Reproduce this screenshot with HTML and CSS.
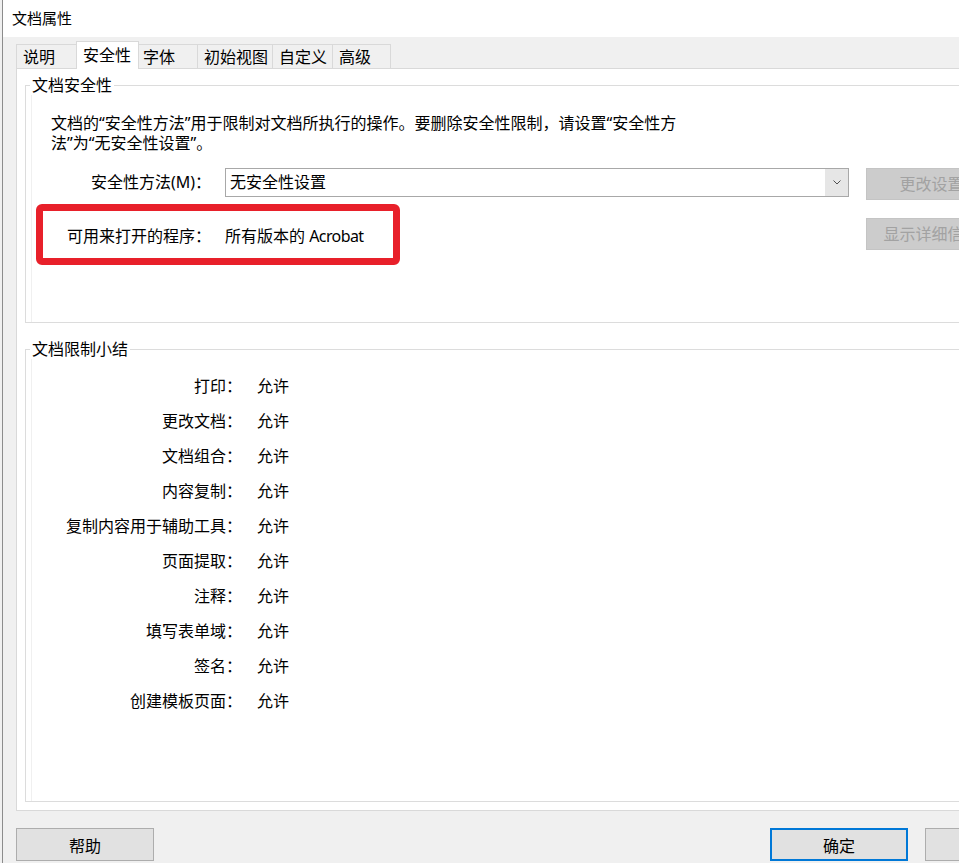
FILE: index.html
```
<!DOCTYPE html>
<html lang="zh-CN">
<head>
<meta charset="utf-8">
<title>文档属性</title>
<link rel="stylesheet" href="styles.css">
</head>
<body>
<div class="window">
  <div class="titlebar">文档属性</div>
  <div class="dialog">
    <div class="tabs">
      <div class="tab tab--desc">说明</div>
      <div class="tab tab--active">安全性</div>
      <div class="tab tab--fonts">字体</div>
      <div class="tab tab--view">初始视图</div>
      <div class="tab tab--custom">自定义</div>
      <div class="tab tab--adv">高级</div>
    </div>
    <div class="panel">
      <fieldset class="group group--security">
        <legend class="group__title">文档安全性</legend>
        <div class="group__body security">
          <p class="security__desc">文档的“安全性方法”用于限制对文档所执行的操作。要删除安全性限制，请设置“安全性方<br>法”为“无安全性设置”。</p>
          <div class="security__grid">
            <div class="method-row">
              <span class="method-row__label">安全性方法(M)：</span>
              <div class="select">
                <span class="select__value">无安全性设置</span>
                <span class="select__arrow"><svg width="8" height="5" viewBox="0 0 8 5"><path d="M0.5 0.5 L4 4 L7.5 0.5" fill="none" stroke="#505050" stroke-width="1"/></svg></span>
              </div>
            </div>
            <button class="btn btn--disabled">更改设置</button>
            <div class="highlight">
              <span class="highlight__label">可用来打开的程序：</span>
              <span class="highlight__value">所有版本的 <span class="latin">Acrobat</span></span>
            </div>
            <button class="btn btn--disabled btn--details">显示详细信息</button>
          </div>
        </div>
      </fieldset>
      <fieldset class="group group--summary">
        <legend class="group__title">文档限制小结</legend>
        <div class="group__body summary">
          <div class="summary__row"><span class="summary__label">打印：</span><span class="summary__value">允许</span></div>
          <div class="summary__row"><span class="summary__label">更改文档：</span><span class="summary__value">允许</span></div>
          <div class="summary__row"><span class="summary__label">文档组合：</span><span class="summary__value">允许</span></div>
          <div class="summary__row"><span class="summary__label">内容复制：</span><span class="summary__value">允许</span></div>
          <div class="summary__row"><span class="summary__label">复制内容用于辅助工具：</span><span class="summary__value">允许</span></div>
          <div class="summary__row"><span class="summary__label">页面提取：</span><span class="summary__value">允许</span></div>
          <div class="summary__row"><span class="summary__label">注释：</span><span class="summary__value">允许</span></div>
          <div class="summary__row"><span class="summary__label">填写表单域：</span><span class="summary__value">允许</span></div>
          <div class="summary__row"><span class="summary__label">签名：</span><span class="summary__value">允许</span></div>
          <div class="summary__row"><span class="summary__label">创建模板页面：</span><span class="summary__value">允许</span></div>
        </div>
      </fieldset>
    </div>
    <div class="footer">
      <button class="btn">帮助</button>
      <div class="footer__actions">
        <button class="btn btn--primary">确定</button>
        <button class="btn">取消</button>
      </div>
    </div>
  </div>
</div>
</body>
</html>
```
FILE: styles.css
```
* { box-sizing: border-box; }

html, body {
  margin: 0;
  padding: 0;
  overflow: hidden;
  background: #f0f0f0;
}

body {
  font-family: "Noto Sans", "Noto Sans CJK SC", sans-serif;
  font-size: 16px;
  color: #000;
}

.window {
  width: 1074px;
  height: 863px;
  margin-left: 2px;
  border-left: 1px solid #8c8c8c;
  background: #f0f0f0;
  display: flex;
  flex-direction: column;
}

.titlebar {
  height: 37px;
  background: #fff;
  padding-left: 9px;
  font-size: 15px;
  line-height: 37px;
}

.dialog {
  flex: 1;
  display: flex;
  flex-direction: column;
  padding: 0 13px;
}

/* Tabs */
.tabs {
  height: 31px;
  display: flex;
  align-items: flex-end;
}

.tab {
  height: 24px;
  line-height: 24px;
  padding-left: 6px;
  border: 1px solid #d9d9d9;
  border-bottom: none;
  background: #f0f0f0;
  margin-left: -1px;
  white-space: nowrap;
}

.tab--desc { width: 61px; margin-left: 0; }
.tab--fonts { width: 60px; padding-left: 4px; }
.tab--view { width: 76px; }
.tab--custom { width: 61px; }
.tab--adv { width: 59px; }

.tab--active {
  width: 63px;
  height: 28px;
  line-height: 26px;
  background: #fff;
  margin-bottom: -1px;
  position: relative;
  z-index: 1;
}

/* Panel */
.panel {
  height: 743px;
  border: 1px solid #d9d9d9;
  background: #fff;
  padding: 6px 8px 8px 8px;
  display: flex;
  flex-direction: column;
}

.group {
  margin: 0;
  padding: 0;
  min-width: 0;
  border: 1px solid #dcdcdc;
}

.group__title {
  margin-left: 4px;
  padding: 0 2px;
  font-size: 16px;
  line-height: 20px;
}

.group__body {
  margin-left: 5px;
  border-left: 1px solid #f0f0f0;
}

/* Security group */
.security {
  padding: 18px 0 57px 19px;
}

.security__desc {
  margin: 0;
  line-height: 20px;
  white-space: nowrap;
}

.security__grid {
  margin-top: 15px;
  display: grid;
  grid-template-columns: 798px 131px;
  column-gap: 17px;
  row-gap: 4px;
  align-items: start;
}

.method-row {
  display: flex;
  align-items: center;
  gap: 14px;
}

.method-row__label {
  width: 160px;
  text-align: right;
  line-height: 29px;
  white-space: nowrap;
}

.select {
  width: 624px;
  height: 29px;
  border: 1px solid #a8a8a8;
  background: #fff;
  display: flex;
}

.select__value {
  flex: 1;
  padding-left: 4px;
  line-height: 27px;
}

.select__arrow {
  width: 23px;
  background: #e6e6e6;
  display: flex;
  align-items: center;
  justify-content: center;
}

.highlight {
  margin-left: -15px;
  width: 364px;
  height: 61px;
  border: 7px solid #e8202a;
  border-radius: 6px;
  padding-left: 24px;
  display: flex;
  align-items: center;
  gap: 14px;
  white-space: nowrap;
}

.latin {
  letter-spacing: -0.6px;
}

/* Buttons */
.btn {
  font: inherit;
  font-size: 16px;
  width: 138px;
  height: 33px;
  padding: 0;
  border: 1px solid #adadad;
  background: #e1e1e1;
  color: #000;
  white-space: nowrap;
  overflow: hidden;
}

.btn--primary {
  border: 2px solid #0078d7;
}

.btn--disabled {
  width: 131px;
  height: 32px;
  border: 1px solid #c4c4c4;
  background: #cccccc;
  color: #a2a2a2;
  line-height: 28px;
}

.btn--details {
  margin-top: 14px;
}

/* Summary group */
.group--summary {
  margin-top: 16px;
  flex: 1;
}

.summary {
  height: 442px;
  padding-top: 10px;
}

.summary__row {
  display: flex;
  gap: 15px;
  line-height: 35px;
}

.summary__label {
  width: 210px;
  text-align: right;
  white-space: nowrap;
}

/* Footer */
.footer {
  flex: 1;
  padding-top: 17px;
  display: flex;
  justify-content: space-between;
  align-items: flex-start;
}

.footer__actions {
  display: flex;
  gap: 17px;
}
```
